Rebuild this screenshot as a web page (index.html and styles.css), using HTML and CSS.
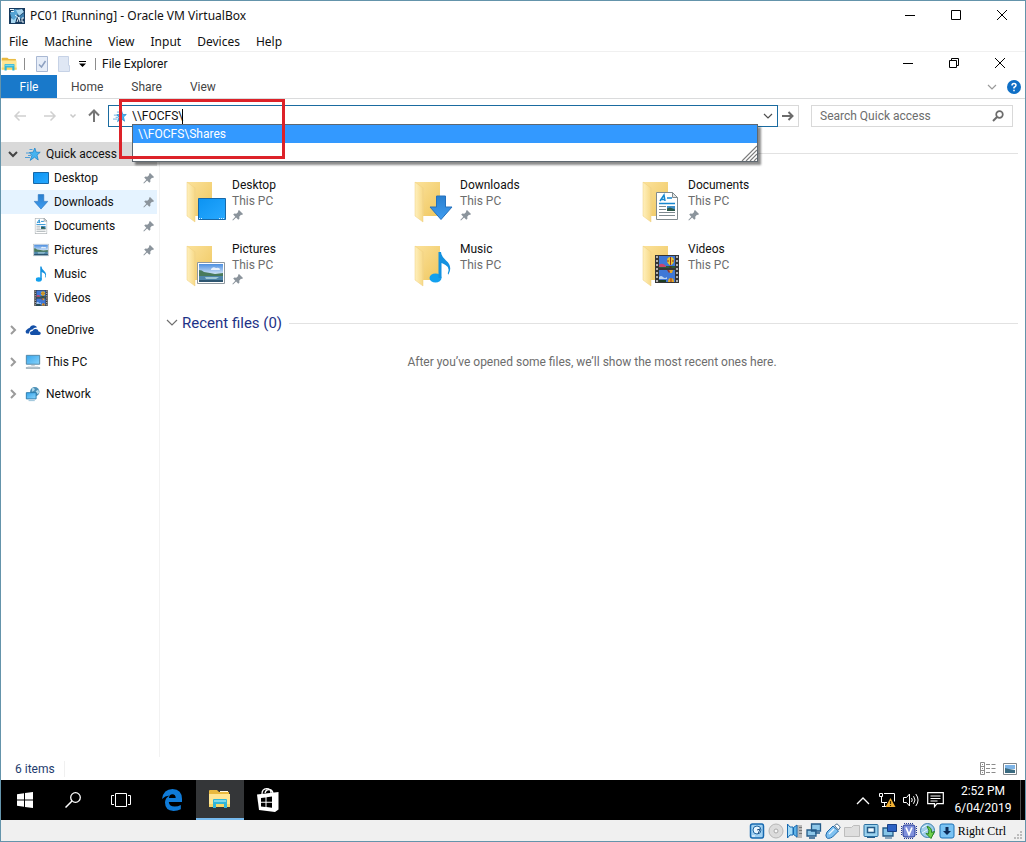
FILE: index.html
```html
<!DOCTYPE html>
<html lang="en">
<head>
    <meta charset="UTF-8">
    <meta name="viewport" content="width=device-width, initial-scale=1.0">
    <title>PC01 [Running] - Oracle VM VirtualBox</title>
    <link rel="stylesheet" href="styles.css">
</head>
<body>
    <!-- Shared icons -->
    <svg class="sprite" aria-hidden="true">
        <defs>
            <linearGradient id="gBack" x1="0" y1="0" x2="1" y2="1"><stop offset="0" stop-color="#fbe19a"/><stop offset="1" stop-color="#efc75f"/></linearGradient>
            <linearGradient id="gFlap" x1="0" y1="0" x2="1" y2="0"><stop offset="0" stop-color="#fff0bd"/><stop offset="1" stop-color="#f7d987"/></linearGradient>
            <linearGradient id="gBlue" x1="0" y1="0" x2="1" y2="1"><stop offset="0" stop-color="#0b93f2"/><stop offset="1" stop-color="#29a9ff"/></linearGradient>
            <linearGradient id="gDown" x1="0" y1="0" x2="0" y2="1"><stop offset="0" stop-color="#2a80cf"/><stop offset="1" stop-color="#3f9cf0"/></linearGradient>
            <linearGradient id="gSky" x1="0" y1="0" x2="0" y2="1"><stop offset="0" stop-color="#4d8fe0"/><stop offset="1" stop-color="#eaf4fb"/></linearGradient>
            <linearGradient id="gPc" x1="0" y1="0" x2="1" y2="1"><stop offset="0" stop-color="#35a5ec"/><stop offset="1" stop-color="#8ad4fb"/></linearGradient>
        </defs>
        <symbol id="pin" viewBox="0 0 12 12">
            <path fill="#8b949c" d="M7 1l4 4-1 1-1-.2-1.800 1.900.3 1.800-1.200 1.200-2.200-2.300L1 11.500l-.7-.6 3-3.200L1.200 5.600l1.200-1.100 1.900.3L6.200 3 6 2z"/>
        </symbol>
        <symbol id="chevron" viewBox="0 0 10 10"><path d="M3 1l4 4-4 4" fill="none" stroke="#9b9b9b" stroke-width="2"/></symbol>
        <symbol id="star" viewBox="0 0 16 16">
            <path fill="#45b3f0" stroke="#1f86cc" stroke-width=".8" d="M9.800 2l1.400 4.200 4 .1-3.200 2.800 1.200 4.900-3.700-2.800-4.300 3.200 1.700-4.900-2.400-3 3.600-.3z"/>
            <path stroke="#2f8fd6" stroke-width=".8" d="M4.500 3.500h3M1 7h4M3 9.500h3M0 11.500h5"/>
        </symbol>
        <symbol id="folder" viewBox="0 0 40 44">
            <path fill="url(#gBack)" d="M1 2h25v34H8z"/>
            <path fill="url(#gFlap)" stroke="#efcf7c" stroke-width=".5" d="M1 2l8 6v34l-8-6z"/>
            <path fill="#f4d58a" d="M8 7l2 1v28l-2-1z" opacity=".5"/>
        </symbol>
        <symbol id="explorer" viewBox="0 0 24 20">
            <path fill="#e9b93f" d="M1 2q0-1 1-1h7l2 2h10v3H1z"/>
            <path fill="#ffe694" d="M1 5h21v13H1z"/>
            <path fill="#f7d567" d="M1 15h21v3H1z"/>
            <path fill="#fffbe5" d="M12 2h8v1h-8z"/>
            <path fill="#2fb5d8" d="M5 11q0-1 1-1h12q1 0 1 1v8h-3v-4H8v4H5z"/>
            <path fill="#79d7ea" d="M6 11h12v2H6z"/>
        </symbol>
        <symbol id="desktop" viewBox="0 0 16 12">
            <path fill="url(#gBlue)" stroke="#1768a8" d="M.5.5h15v11H.5z"/>
        </symbol>
        <symbol id="desktop-large" viewBox="0 0 28 22">
            <path fill="url(#gBlue)" stroke="#1768a8" d="M.5.5h27v21H.5z"/>
            <path stroke="#d6efff" stroke-dasharray="1 1" d="M1 20.500h3M21 20.500h6"/>
        </symbol>
        <symbol id="arrowdown" viewBox="0 0 24 26">
            <path fill="url(#gDown)" stroke="#2571bd" d="M7.500 1h9v11H23L12 24.500 1 12h6.500z"/>
        </symbol>
        <symbol id="document" viewBox="0 0 22 28">
            <path fill="#fff" stroke="#808a8e" d="M.5.5h16l5 5v22H.500z"/>
            <path fill="#e0e4e6" stroke="#808a8e" d="M16.500.5v5h5z"/>
            <path fill="none" stroke="#1787cf" stroke-width="1.500" d="M4 9l4-6 1 6M5 7.500h4M3 11.500h16M11 6h5"/>
            <path stroke="#7e8a90" d="M3 14.500h7M3 17.500h7M3 20.500h16M3 23.500h16"/>
            <path fill="#3f8ec7" d="M11 14h8v5h-8z"/>
            <path fill="#2d5a4a" d="M11 16.500l3-1 5 2V19h-8z"/>
        </symbol>
        <symbol id="picture" viewBox="0 0 28 22">
            <path fill="#fff" stroke="#8e989f" d="M.5.5h27v21H.5z"/>
            <path fill="url(#gSky)" d="M2 2h24v12H2z"/>
            <path fill="#fff" d="M14 7q2-3 5-1 4-1 4 2h-9z" opacity=".8"/>
            <path fill="#497a5b" d="M2 8q3 0 5 2l6 1 5 1 8-1v4H2z"/>
            <path fill="#4f86a9" d="M2 14h24v6H2z"/>
            <path fill="#9fc7d6" d="M8 15h14l-3 2H9z"/>
            <path fill="#2d5570" d="M2 18h24v2H2z"/>
        </symbol>
        <symbol id="music" viewBox="0 0 22 32">
            <ellipse cx="6.500" cy="27" rx="6" ry="4.500" fill="#12a0ee"/>
            <path fill="#1391e0" d="M9.500 1H12q.5 5 5 8.500 7 6 2.500 14-1-.5-.5-2 2-5-2.500-7.500-2.500-1.500-4.000-2v15H9.500z"/>
        </symbol>
        <symbol id="video" viewBox="0 0 24 28">
            <path fill="#353535" d="M0 0h24v28H0z"/>
            <path stroke="#dcdcdc" stroke-width="1.500" stroke-dasharray="2 2" d="M2 1v27M22 1v27"/>
            <path fill="#3f78d6" d="M4 1h16v12H4zM4 15h16v12H4z"/>
            <path fill="#2c5b38" d="M4 11h16v2H4z"/>
            <path fill="#c9476e" d="M4 10q3-3 7 1v1H4z"/>
            <path fill="#e9c42e" d="M12 6q0-4 3.500-4T19 6q0 2-2.500 4h-2Q12 8 12 6z"/>
            <path fill="#8f3420" d="M15 2h1v8h-1zM12 5.500h2v1h-2zM17 5.500h2v1h-2z"/>
            <path fill="#5b3015" d="M14.500 11h2v2h-2z"/>
            <path fill="#e3a728" d="M14 15h4l-1 3h-2zM13 27q0-4 3-4t3 4z"/>
            <path fill="#9b3427" d="M12 15h2l1 2-1 1zM15.500 23h1v4h-1z"/>
            <path fill="#b9d2ef" d="M4 22q2-2 4 0t4 0v2H4z"/>
            <path fill="#1d3d22" d="M4 25h7v2H4z"/>
        </symbol>
        <symbol id="onedrive" viewBox="0 0 16 12">
            <path fill="#1450a8" d="M1.500 9.500Q-.5 7 2 5.500 3 4 4.500 4 6 .5 9.500 1.500q2 .5 2.500 2-3-.5-4.500 2-3 0-3.500 4z"/>
            <path fill="#1450a8" d="M6.500 11q-2-.5-1.500-2.500.5-1.500 2.500-1.500 1-2.500 3.500-2 2.300.3 2.600 2.600 2.200.2 2.200 2-.2 1.400-1.800 1.400z"/>
        </symbol>
        <symbol id="thispc" viewBox="0 0 18 16">
            <path fill="url(#gPc)" stroke="#4c7f9f" d="M1.500.5h15v10h-15z"/>
            <path fill="#8fa4b0" d="M7 11h4v1H7zM1 14h16v1.500H1z"/>
            <path fill="#c5d1d8" d="M3 13h12v1H3z"/>
        </symbol>
        <symbol id="network" viewBox="0 0 18 16">
            <circle cx="11" cy="5.500" r="5.300" fill="#4b8fb6"/>
            <path fill="#b5dced" d="M8 1.500q3-1 3 2l-3 2zM12 5l3-2 1 4-2 1z"/>
            <path fill="url(#gPc)" stroke="#2676a8" d="M1.500 6.500h11v7h-11z"/>
            <path fill="#8bbad4" d="M4 15h7v1H4z"/>
        </symbol>
    </svg>

    <div class="vm-window">
        <header class="vm-title">
            <svg class="vm-logo" viewBox="0 0 16 16"><path fill="#173a5e" d="M0 0h16v16H0z"/><path fill="#55a3d3" d="M1 5l5-4 4 1-4 13H4z"/><path fill="#a8d6ef" d="M7 2l6-1 2 3-5 4zM2 10l3 2 3-4-2 7H2z"/><path fill="#3d7fae" d="M9 9l6-4v5l-5 1z"/><path stroke="#e9f5fc" fill="none" d="M1 1.500h4M2 3.500h3M8 14l2-5 1 5M15 10h-2v4h2M6 7l4 3"/></svg>
            <span>PC01 [Running] - Oracle VM VirtualBox</span>
            <div class="window-controls">
                <button type="button" aria-label="Minimize machine"><svg viewBox="0 0 12 12"><path d="M1 5.500h10"/></svg></button>
                <button type="button" aria-label="Maximize machine"><svg viewBox="0 0 12 12"><path d="M1.500.5h9v9h-9z"/></svg></button>
                <button type="button" aria-label="Close machine"><svg viewBox="0 0 12 12"><path d="M1 0l10 10M11 0L1 10"/></svg></button>
            </div>
        </header>
        <nav class="vm-menu">
            <button type="button">File</button>
            <button type="button">Machine</button>
            <button type="button">View</button>
            <button type="button">Input</button>
            <button type="button">Devices</button>
            <button type="button">Help</button>
        </nav>

        <div class="explorer">
            <header class="explorer-title">
                <svg class="explorer-logo" viewBox="0 0 24 20"><use href="#explorer"/></svg>
                <span class="separator"></span>
                <button type="button" class="quick-button" aria-label="Properties"><svg viewBox="0 0 12 16"><path fill="#e6edf8" stroke="#a9b8d3" d="M.5.500h11v15H.5z"/><path fill="none" stroke="#8da0c0" stroke-width="1.500" d="M3 8.500l2.500 2.500L9.500 5"/></svg></button>
                <button type="button" class="quick-button" aria-label="New folder"><svg viewBox="0 0 12 16"><path fill="#dfe7f4" stroke="#c6d2e6" d="M.5.500h10v9h1v6H.5z"/></svg></button>
                <button type="button" class="quick-menu" aria-label="Customize toolbar"><svg viewBox="0 0 7 6"><path d="M0 0h7v1H0zM0 2.500h7L3.500 6z"/></svg></button>
                <span class="separator"></span>
                <span class="explorer-name">File Explorer</span>
                <div class="window-controls inner">
                    <button type="button" aria-label="Minimize"><svg viewBox="0 0 12 12"><path d="M1 5.500h10"/></svg></button>
                    <button type="button" aria-label="Restore"><svg viewBox="0 0 12 12"><path d="M1.500 2.500h7v7h-7zM3.500 2.500v-2h7v7h-2"/></svg></button>
                    <button type="button" aria-label="Close"><svg viewBox="0 0 12 12"><path d="M1 0l10 10M11 0L1 10"/></svg></button>
                </div>
            </header>

            <nav class="ribbon">
                <button type="button" class="active">File</button>
                <button type="button">Home</button>
                <button type="button">Share</button>
                <button type="button">View</button>
                <div class="ribbon-tools">
                    <button type="button" aria-label="Expand ribbon"><svg width="10" height="10" viewBox="0 0 10 10"><path d="M1 3l4 4 4-4" fill="none" stroke="#9a9a9a" stroke-width="1.200"/></svg></button>
                    <button type="button" aria-label="Help"><svg width="14" height="14" viewBox="0 0 14 14"><circle cx="7" cy="7" r="7" fill="#0f6fc6"/><path fill="none" stroke="#fff" stroke-width="1.500" d="M5 5.500Q5 3.500 7 3.500t2 1.800Q9 6.300 7 7.500v1M7 9.700v1.500"/></svg></button>
                </div>
            </nav>

            <div class="address-row">
                <button type="button" class="go-back" aria-label="Back"><svg width="14" height="12" viewBox="0 0 14 12"><path d="M13 6H2M6.500 1.500L2 6l4.500 4.500" fill="none" stroke="#d0d0d0" stroke-width="1.500"/></svg></button>
                <button type="button" class="go-forward" aria-label="Forward"><svg width="14" height="12" viewBox="0 0 14 12"><path d="M1 6h11M7.500 1.500L12 6l-4.500 4.500" fill="none" stroke="#d0d0d0" stroke-width="1.500"/></svg></button>
                <button type="button" class="go-recent" aria-label="Recent locations"><svg width="8" height="6" viewBox="0 0 8 6"><path d="M1.500 1.500L4 4l2.500-2.500" fill="none" stroke="#c9c9c9" stroke-width="1.500"/></svg></button>
                <button type="button" class="go-up" aria-label="Up"><svg width="12" height="14" viewBox="0 0 12 14"><path d="M6 13V2M1 6.500L6 1.500l5 5" fill="none" stroke="#767676" stroke-width="2"/></svg></button>
                <div class="address">
                    <svg class="address-icon"><use href="#star"/></svg>
                    <input type="text" id="address" value="\\FOCFS\" aria-label="Address" spellcheck="false">
                    <button type="button" aria-label="Previous locations"><svg width="10" height="8" viewBox="0 0 10 8"><path d="M1 2l4 4 4-4" fill="none" stroke="#505050" stroke-width="1.200"/></svg></button>
                    <span class="caret"></span>
                    <div class="suggestions">
                        <button type="button" class="suggestion">\\FOCFS\Shares</button>
                        <svg class="grip" viewBox="0 0 16 16"><path d="M1 16L16 1M5 16L16 5M9 16l7-7M13 16l3-3" stroke="#7c7c7c" stroke-width="1.200"/></svg>
                    </div>
                    <div class="marker"></div>
                </div>
                <button type="button" class="go" aria-label="Go"><svg width="12" height="10" viewBox="0 0 12 10"><path d="M0 5h10M6.500 1l4 4-4 4" fill="none" stroke="#6b6b6b" stroke-width="2"/></svg></button>
                <div class="search">
                    <input type="text" placeholder="Search Quick access" aria-label="Search Quick access">
                    <svg width="12" height="12" viewBox="0 0 12 12"><circle cx="7.500" cy="4.500" r="3.300" fill="none" stroke="#6b6b6b" stroke-width="1.700"/><path d="M5 7l-4 4" stroke="#6b6b6b" stroke-width="2"/></svg>
                </div>
            </div>

            <div class="content">
                <nav class="sidebar">
                    <a href="#" class="node current"><svg class="arrow" viewBox="0 0 10 10"><path d="M1 3l4 4 4-4" fill="none" stroke="#444" stroke-width="2"/></svg><svg class="icon"><use href="#star"/></svg><span>Quick access</span></a>
                    <a href="#" class="node child"><svg class="icon" viewBox="0 0 16 12"><use href="#desktop"/></svg><span>Desktop</span><svg class="pin"><use href="#pin"/></svg></a>
                    <a href="#" class="node child hovered"><svg class="icon" viewBox="0 0 24 26"><use href="#arrowdown"/></svg><span>Downloads</span><svg class="pin"><use href="#pin"/></svg></a>
                    <a href="#" class="node child"><svg class="icon" viewBox="0 0 22 28"><use href="#document"/></svg><span>Documents</span><svg class="pin"><use href="#pin"/></svg></a>
                    <a href="#" class="node child"><svg class="icon" viewBox="0 0 28 22"><use href="#picture"/></svg><span>Pictures</span><svg class="pin"><use href="#pin"/></svg></a>
                    <a href="#" class="node child"><svg class="icon" viewBox="0 0 22 32"><use href="#music"/></svg><span>Music</span></a>
                    <a href="#" class="node child"><svg class="icon" viewBox="0 0 24 28"><use href="#video"/></svg><span>Videos</span></a>
                    <a href="#" class="node root"><svg class="arrow"><use href="#chevron"/></svg><svg class="icon"><use href="#onedrive"/></svg><span>OneDrive</span></a>
                    <a href="#" class="node root"><svg class="arrow"><use href="#chevron"/></svg><svg class="icon"><use href="#thispc"/></svg><span>This PC</span></a>
                    <a href="#" class="node root"><svg class="arrow"><use href="#chevron"/></svg><svg class="icon"><use href="#network"/></svg><span>Network</span></a>
                </nav>

                <main class="files">
                    <hr class="group-line">
                    <div class="tiles">
                        <a href="#" class="tile">
                            <svg class="tile-icon" viewBox="0 0 42 44"><use href="#folder" width="40" height="44"/><use href="#desktop-large" x="12" y="18" width="28" height="22"/></svg>
                            <div><div>Desktop</div><div class="place">This PC</div><svg class="pin"><use href="#pin"/></svg></div>
                        </a>
                        <a href="#" class="tile">
                            <svg class="tile-icon" viewBox="0 0 42 44"><use href="#folder" width="40" height="44"/><use href="#arrowdown" x="15" y="15" width="24" height="26"/></svg>
                            <div><div>Downloads</div><div class="place">This PC</div><svg class="pin"><use href="#pin"/></svg></div>
                        </a>
                        <a href="#" class="tile">
                            <svg class="tile-icon" viewBox="0 0 42 44"><use href="#folder" width="40" height="44"/><use href="#document" x="14" y="12" width="22" height="28"/></svg>
                            <div><div>Documents</div><div class="place">This PC</div><svg class="pin"><use href="#pin"/></svg></div>
                        </a>
                        <a href="#" class="tile">
                            <svg class="tile-icon" viewBox="0 0 42 44"><use href="#folder" width="40" height="44"/><use href="#picture" x="11" y="18" width="28" height="22"/></svg>
                            <div><div>Pictures</div><div class="place">This PC</div><svg class="pin"><use href="#pin"/></svg></div>
                        </a>
                        <a href="#" class="tile">
                            <svg class="tile-icon" viewBox="0 0 42 44"><use href="#folder" width="40" height="44"/><use href="#music" x="15" y="7" width="22" height="32"/></svg>
                            <div><div>Music</div><div class="place">This PC</div></div>
                        </a>
                        <a href="#" class="tile">
                            <svg class="tile-icon" viewBox="0 0 42 44"><use href="#folder" width="40" height="44"/><use href="#video" x="13" y="11" width="24" height="28"/></svg>
                            <div><div>Videos</div><div class="place">This PC</div></div>
                        </a>
                    </div>
                    <h2 class="group"><svg width="12" height="10" viewBox="0 0 12 10"><path d="M1 2l5 5 5-5" fill="none" stroke="#6f6f6f" stroke-width="1.200"/></svg><span>Recent files (0)</span></h2>
                    <p class="empty">After you’ve opened some files, we’ll show the most recent ones here.</p>
                </main>
            </div>

            <footer class="explorer-status">
                <span>6 items</span>
                <div class="views">
                    <button type="button" aria-label="Details view"><svg width="16" height="13" viewBox="0 0 16 13"><path fill="none" stroke="#8b8b8b" d="M.5.5h4v12h-4zM.5 4.500h4M.5 8.500h4M2 2.500h1M2 6.500h1M2 10.500h1M6 2.500h4M11.500 2.500h4M6 6.500h4M11.500 6.500h4M6 10.500h4M11.500 10.500h4"/></svg></button>
                    <button type="button" aria-label="Large icons view"><svg width="14" height="12" viewBox="0 0 14 12"><path fill="#fff" stroke="#7f868b" d="M.5.5h13v11H.5z"/><path fill="#7db4e6" d="M2 2h10v4H2z"/><path fill="#396a80" d="M2 5l4 1 6 1v3H2z"/></svg></button>
                </div>
            </footer>
        </div>

        <div class="taskbar">
            <button type="button" aria-label="Start"><svg width="16" height="16" viewBox="0 0 16 16"><path fill="#fff" d="M0 2.200l7-1v6.300H0zM8 1.100L16 0v7.500H8zM0 8.500h7v6.300l-7-1zM8 8.500h8V16l-8-1.100z"/></svg></button>
            <button type="button" aria-label="Search"><svg width="16" height="16" viewBox="0 0 16 16"><circle cx="10.500" cy="5.500" r="4.800" fill="none" stroke="#fff" stroke-width="1.300"/><path d="M7 9l-6.500 6.500" stroke="#fff" stroke-width="1.500"/></svg></button>
            <button type="button" aria-label="Task view"><svg width="20" height="14" viewBox="0 0 20 14"><path fill="none" stroke="#fff" d="M4.500.5h11v13h-11zM3 2.500H.5v9H3M17 2.500h2.500v9H17"/></svg></button>
            <button type="button" class="first-app" aria-label="Edge"><svg width="20" height="22" viewBox="0 0 20 22"><path fill="#0f7bd8" d="M0 10Q1.500 0 10.500 0 20 .5 20 10v3H6.800q.4 4.500 6 4.600 3.200 0 6-1.700v4.300Q15.500 22 11.500 22 3 21.500 3 13.500 3 9 7.500 6.500 3 6.800 0 10zM6.900 9h6.800q0-3.800-3.300-3.800Q7.300 5.300 6.900 9z"/></svg></button>
            <button type="button" class="open" aria-label="File Explorer"><svg width="24" height="20"><use href="#explorer"/></svg></button>
            <button type="button" aria-label="Store"><svg width="22" height="24" viewBox="0 0 22 24"><path fill="none" stroke="#fff" stroke-width="1.300" d="M5 6q0-5 4.500-5.300Q14 .5 14 5M8 5q1-3.500 4-3.500t4 3.500"/><path fill="#fff" d="M0 6.500L21.500 4v17.500L18 24 2 22z"/><path fill="#000" d="M4 10l4.500-.6v4.300H4zM9.500 9.300l5.500-.8v5.200H9.500zM4 14.700h4.500v4.300L4 18.500zM9.500 14.700H15v5l-5.500-.6z"/></svg></button>
            <div class="tray">
                <button type="button" aria-label="Show hidden icons"><svg width="14" height="9" viewBox="0 0 14 9"><path d="M1 8l6-6 6 6" fill="none" stroke="#fff" stroke-width="1.300"/></svg></button>
                <button type="button" aria-label="Network"><svg width="17" height="16" viewBox="0 0 17 16"><path fill="none" stroke="#fff" d="M.5 1.500h3v3h-3zM5 1.500h10.500v8M2.500 5v5.500H8M5.500 11v3M3 14.500h5"/><path fill="#f2b134" d="M11.500 6l5 9h-10z"/><path stroke="#3b2b00" stroke-width="1.200" d="M11.500 9v3M11.500 13v1"/></svg></button>
                <button type="button" aria-label="Volume"><svg width="17" height="14" viewBox="0 0 17 14"><path fill="none" stroke="#fff" d="M.5 4.500h3l3-3.500v12l-3-3.500h-3zM8.500 5q1.500 2 0 4M10.500 3.200q3 3.800 0 7.600M12.800 1q4.500 6 0 12"/></svg></button>
                <button type="button" aria-label="Action center"><svg width="17" height="16" viewBox="0 0 17 16"><path fill="none" stroke="#fff" stroke-width="1.200" d="M.7.7h15.600v11H10l-2.500 3v-3H.7zM3.500 4h10M3.500 6.500h10M3.500 9h7"/></svg></button>
                <div class="clock"><div>2:52 PM</div><div>6/04/2019</div></div>
                <span class="show-desktop"></span>
            </div>
        </div>

        <footer class="vm-status">
            <svg viewBox="0 0 16 16"><rect x="1.500" y="1" width="13" height="14" rx="2" fill="#9fd0f2" stroke="#1769b0" stroke-width="1.500"/><circle cx="8" cy="7" r="4" fill="#e8f6ff" stroke="#2166a0"/><path d="M8 7l3-1-2 5" fill="none" stroke="#194c80"/><path d="M3 13h3" stroke="#fff"/></svg>
            <svg viewBox="0 0 16 16"><circle cx="8" cy="8" r="7" fill="#dcdcdc" stroke="#b6b6b6"/><circle cx="8" cy="8" r="2" fill="#f7f7f7" stroke="#a9a9a9"/></svg>
            <svg viewBox="0 0 16 16"><path fill="#b8b8b8" d="M9 2h6v13H9z"/><path stroke="#777" d="M12 4.500h3M12 7.500h3M12 10.500h3"/><path fill="#a6dcf8" stroke="#1769b0" d="M.5 1l2.500 3h3v8H3L.5 15z"/><path fill="#5fb2e6" stroke="#1769b0" d="M6.500 4.500L10 2v12l-3.500-2.500z"/></svg>
            <svg viewBox="0 0 16 16"><path fill="#8ec7e8" stroke="#245b89" stroke-width="1.300" d="M5.500 1h9v7h-9zM1 7h9v6H1z"/><path stroke="#245b89" stroke-width="1.500" d="M3 15h6M9 10h5"/></svg>
            <svg viewBox="0 0 16 16"><path fill="#7fc1f0" stroke="#1f69aa" d="M8 3l5.500 5-6 6Q3 16.500 1.500 14.500T2 9z"/><path fill="#fff" stroke="#4a6f90" d="M9.500 2.500L12 .8 15.300 4l-1.800 3z"/><path stroke="#e9f6ff" stroke-width="1.500" d="M4 11l5-5"/></svg>
            <svg viewBox="0 0 16 16"><path fill="#dedede" stroke="#bdbdbd" d="M.5 4.500h7l2-2h6v11H.5z"/></svg>
            <svg viewBox="0 0 16 16"><rect x="1" y="1.500" width="14" height="12" rx="1" fill="#9bd3ef" stroke="#2b6f9f"/><path fill="#f2fbff" stroke="#245b89" stroke-width="1.500" d="M4.500 4.500h7v5h-7z"/><path stroke="#245b89" d="M4 14.500h8"/></svg>
            <svg viewBox="0 0 16 16"><path fill="#86c5e8" stroke="#245b89" stroke-width="1.300" d="M1 5h10v8H1z"/><path fill="#2d62c4" stroke="#173f86" d="M5.500 1.500h9v7h-9z"/><path stroke="#245b89" d="M3 15h7"/></svg>
            <svg viewBox="0 0 16 16"><rect x="2" y="2" width="12" height="12" rx="2" fill="#7f90dc" stroke="#253a96"/><path stroke="#253a96" stroke-dasharray="1 1" d="M3 .5h10M3 15.500h10M.5 3v10M15.500 3v10"/><path fill="none" stroke="#fff" stroke-width="1.700" d="M5 4.500l3 7 3-7"/></svg>
            <svg viewBox="0 0 16 16"><circle cx="7.500" cy="7.500" r="7" fill="#9fcde9" stroke="#3a7eae"/><path stroke="#e5f5ff" d="M2 5l5-3M2 10l5-3"/><path fill="#6fd04b" stroke="#2c8427" d="M7 3.500q5 .5 4.500 6l3-1-3.500 7-5-5 2.500.5Q10 7 7 3.500z"/></svg>
            <svg viewBox="0 0 16 16"><rect x="1" y="1" width="14" height="14" rx="2" fill="#7ac3f3" stroke="#1c71b5"/><path fill="#0c2b57" d="M6.500 4h3v4H12l-4 4-4-4h2.500z"/></svg>
            <span>Right Ctrl</span>
            <svg class="size-grip" viewBox="0 0 10 10"><path fill="#bcbcbc" d="M7 1h2v2H7zM4 4h2v2H4zM7 4h2v2H7zM1 7h2v2H1zM4 7h2v2H4zM7 7h2v2H7z"/></svg>
        </footer>
    </div>
</body>
</html>
```
FILE: styles.css
```css
* {
    box-sizing: border-box;
}
body {
    margin: 0;
    font-family: "Noto Sans", "Open Sans", sans-serif;
    font-size: 12px;
    line-height: 16px;
    color: #111;
    background-color: #fff;
}
button, input {
    font: inherit;
    color: inherit;
    margin: 0;
    padding: 0;
    border: none;
    background: none;
    outline: none;
}
button {
    display: flex;
    align-items: center;
    justify-content: center;
}
a {
    color: inherit;
    text-decoration: none;
}
svg {
    display: block;
    flex: none;
}
.sprite {
    position: absolute;
    width: 0;
    height: 0;
}
.vm-window {
    display: flex;
    flex-direction: column;
    min-height: 100vh;
    border: 1px solid #6494ab;
}

/* Host window */
.vm-title {
    display: flex;
    align-items: center;
    height: 30px;
    padding-left: 8px;
    gap: 5px;
}
.vm-logo {
    width: 16px;
    height: 16px;
}
.window-controls {
    display: flex;
    margin-left: auto;
}
.window-controls.inner {
    padding-right: 2px;
}
.window-controls button {
    width: 46px;
    height: 22px;
}
.window-controls svg {
    width: 12px;
    height: 12px;
    fill: none;
    stroke: #000;
}
.vm-menu {
    display: flex;
    height: 21px;
    padding-top: 2px;
    border-bottom: 1px solid #f0f0f0;
}
.vm-menu button {
    padding: 0 8px;
}

/* Explorer title and ribbon */
.explorer {
    display: flex;
    flex-direction: column;
    flex: 1;
    font-family: Roboto, "Open Sans", sans-serif;
}
.explorer-title {
    display: flex;
    align-items: center;
    height: 23px;
}
.explorer-logo {
    width: 17px;
    height: 16px;
}
.separator {
    width: 1px;
    height: 12px;
    margin: 0 6px;
    background-color: #8c8c8c;
}
.quick-button {
    width: 22px;
}
.quick-button svg {
    width: 12px;
    height: 16px;
}
.quick-menu {
    width: 14px;
}
.quick-menu svg {
    width: 7px;
    height: 6px;
}
.ribbon {
    display: flex;
    height: 24px;
    border-bottom: 1px solid #dadbdc;
    color: #444;
}
.ribbon button {
    padding: 0 14px;
}
.ribbon .active {
    width: 56px;
    color: #fff;
    background-color: #1979ca;
}
.ribbon-tools {
    display: flex;
    margin-left: auto;
    padding-right: 4px;
    gap: 10px;
}
.ribbon .ribbon-tools button {
    padding: 0;
}

/* Address bar */
.address-row {
    display: flex;
    padding: 6px 12px 15px 4px;
}
.address-row button {
    height: 22px;
}
.go-back, .go-forward {
    width: 30px;
}
.go-recent {
    width: 16px;
}
.go-up {
    width: 26px;
    margin-right: 1px;
}
.address {
    position: relative;
    display: flex;
    flex: 1;
    align-items: center;
    height: 22px;
    padding-left: 4px;
    border: 1px solid #1a6ba0;
}
.address-icon {
    width: 14px;
    height: 14px;
}
.address input {
    flex: 1;
    min-width: 0;
    padding-left: 5px;
    height: 20px;
}
.address > button {
    width: 18px;
    height: 20px;
}
.caret {
    position: absolute;
    left: 73px;
    top: 3px;
    width: 1px;
    height: 15px;
    background-color: #000;
}
.suggestions {
    position: absolute;
    z-index: 1;
    left: 23px;
    right: 19px;
    top: 18px;
    height: 38px;
    border: 1px solid #5f6870;
    background-color: #fff;
    box-shadow: 3px 3px 2px rgba(0, 0, 0, 0.45);
}
.suggestions .suggestion {
    width: 100%;
    height: 18px;
    padding-left: 5px;
    justify-content: flex-start;
    color: #fff;
    background-color: #3399ff;
}
.grip {
    position: absolute;
    right: 0;
    bottom: 0;
    width: 16px;
    height: 16px;
}
.marker {
    position: absolute;
    z-index: 2;
    left: 10px;
    top: -7px;
    width: 166px;
    height: 60px;
    border: 3px solid #dd2229;
    pointer-events: none;
}
.address-row .go {
    width: 21px;
    border: 1px solid #d9d9d9;
    border-left: none;
}
.search {
    display: flex;
    align-items: center;
    width: 202px;
    height: 22px;
    margin-left: 12px;
    padding: 0 8px;
    border: 1px solid #d9d9d9;
}
.search input {
    flex: 1;
    min-width: 0;
}
.search input::placeholder {
    color: #6d6d6d;
    opacity: 1;
}

/* Folder tree */
.content {
    display: flex;
    flex: 1;
}
.sidebar {
    width: 159px;
    padding-right: 2px;
    border-right: 1px solid #f2f2f2;
}
.node {
    display: flex;
    align-items: center;
    height: 24px;
    padding: 0 2px 0 7px;
}
.node .arrow {
    width: 10px;
    height: 10px;
    margin-right: 7px;
}
.node .icon {
    width: 16px;
    height: 16px;
    margin-right: 5px;
}
.node.child {
    padding-left: 32px;
}
.node.root {
    margin-top: 8px;
}
.node.current {
    background-color: #d9d9d9;
}
.node.hovered {
    background-color: #e5f3ff;
}
.pin {
    width: 12px;
    height: 12px;
}
.node .pin {
    margin-left: auto;
}

/* Folder contents */
.files {
    flex: 1;
    min-width: 0;
    padding: 11px 7px 0 6px;
}
.group-line {
    margin: 0;
    border: none;
    border-top: 1px solid #e2e2e2;
}
.tiles {
    display: grid;
    grid-template-columns: repeat(auto-fill, 228px);
    grid-auto-rows: 64px;
    padding: 23px 0 0 20px;
}
.tile {
    display: flex;
    gap: 4px;
}
.tile-icon {
    width: 42px;
    height: 44px;
    margin-top: 3px;
}
.place {
    color: #6d6d6d;
}
.group {
    display: flex;
    align-items: center;
    margin: 8px 0 0;
    gap: 4px;
    font-size: 15px;
    line-height: 20px;
    font-weight: normal;
    color: #1e3287;
}
.group::after {
    content: "";
    flex: 1;
    height: 1px;
    margin-left: 3px;
    background-color: #e2e2e2;
}
.empty {
    margin: 21px 0 0;
    text-align: center;
    color: #6d6d6d;
}
.explorer-status {
    display: flex;
    align-items: center;
    height: 23px;
    padding: 0 8px 0 14px;
    color: #1e3c6e;
}
.explorer-status span {
    padding-right: 9px;
    border-right: 1px solid #f0f0f0;
}
.views {
    display: flex;
    margin-left: auto;
    gap: 7px;
}

/* Guest taskbar */
.taskbar {
    display: flex;
    height: 40px;
    font-family: Roboto, "Open Sans", sans-serif;
    color: #fff;
    background-color: #000;
}
.taskbar > button {
    width: 48px;
}
.taskbar .first-app {
    margin-left: 3px;
}
.taskbar .open {
    background-color: #343638;
    border-bottom: 2px solid #76b9ed;
}
.tray {
    display: flex;
    margin-left: auto;
}
.tray button {
    width: 24px;
}
.clock {
    width: 72px;
    padding-top: 3px;
    line-height: 17px;
    text-align: center;
}
.show-desktop {
    width: 5px;
    margin-left: 1px;
    border-left: 1px solid #4a4a4a;
}

/* Host status bar */
.vm-status {
    display: flex;
    align-items: center;
    justify-content: flex-end;
    height: 21px;
    padding-right: 2px;
    gap: 3px;
    font-family: "Liberation Serif", serif;
    color: #000;
    background-color: #f0f0f0;
}
.vm-status svg {
    width: 16px;
    height: 16px;
}
.vm-status .size-grip {
    width: 10px;
    height: 10px;
    margin: 8px 0 0 4px;
}
```
